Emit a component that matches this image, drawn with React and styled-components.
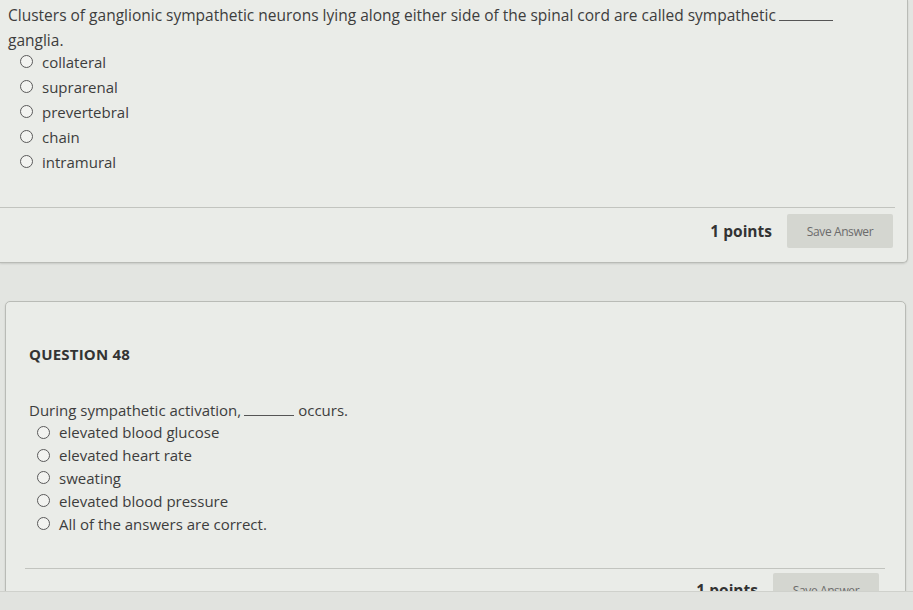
import React from "react";
import styled, { createGlobalStyle } from "styled-components";

const GlobalStyle = createGlobalStyle`
  html, body {
    margin: 0;
    padding: 0;
    background: #e3e5e1;
    font-family: "Open Sans", "Liberation Sans", sans-serif;
    color: #3d3d3d;
    overflow: hidden;
  }
`;

const Page = styled.div`
  width: 913px;
  height: 610px;
  overflow: hidden;
`;

const Card = styled.div`
  background: #eaece8;
  border: 1px solid #b9bbb6;
  border-top: ${props => (props.cut ? "none" : "1px solid #b9bbb6")};
  border-left: ${props => (props.cut ? "none" : "1px solid #b9bbb6")};
  border-radius: ${props => (props.cut ? "0 0 5px 0" : "5px")};
  box-shadow: 0 1px 2px rgba(0, 0, 0, 0.12);
  margin: ${props => props.margin};
`;

const Body = styled.div`
  height: ${props => props.height}px;
  padding: ${props => props.pad};
  box-sizing: border-box;
`;

const Heading = styled.div`
  font-size: 15px;
  font-weight: 700;
  color: #333;
  letter-spacing: 0.2px;
  margin-bottom: 35px;
`;

const Prompt = styled.div`
  font-size: ${props => props.size}px;
  line-height: ${props => props.lh}px;
  width: ${props => props.w}px;
`;

const Blank = styled.span`
  display: inline-block;
  width: ${props => props.w}px;
  border-bottom: 1px solid #555;
  margin: 0 4px 0 3px;
  vertical-align: baseline;
`;

const Options = styled.div`
  display: flex;
  flex-direction: column;
  padding-left: ${props => props.indent}px;
  margin-top: ${props => props.mt || 0}px;
`;

const Option = styled.label`
  display: flex;
  align-items: center;
  gap: 9px;
  height: ${props => props.h}px;
  font-size: 15px;
`;

const Radio = styled.span`
  width: 11px;
  height: 11px;
  border: 1.5px solid #5a5a5a;
  border-radius: 50%;
  background: #f2f3f0;
  flex-shrink: 0;
`;

const Divider = styled.div`
  border-top: 1px solid #c2c4bf;
  margin: ${props => props.margin};
`;

const Footer = styled.div`
  display: flex;
  justify-content: flex-end;
  align-items: center;
  gap: 15px;
  height: ${props => props.h}px;
  padding-right: ${props => props.pr}px;
  padding-bottom: ${props => props.pb || 0}px;
`;

const Points = styled.div`
  font-size: 15.5px;
  font-weight: 700;
  color: #333;
`;

const SaveButton = styled.button`
  width: 106px;
  height: 34px;
  border: none;
  border-radius: 2px;
  background: #d4d6d0;
  color: #6b6b6b;
  font-family: "Open Sans", "Liberation Sans", sans-serif;
  font-size: 12px;
  letter-spacing: -0.4px;
`;

const BottomStrip = styled.div`
  position: fixed;
  left: 0;
  right: 0;
  bottom: 0;
  height: 18px;
  background: #e1e3df;
  border-top: 1px solid #cfd1cc;
`;

const q47 = ["collateral", "suprarenal", "prevertebral", "chain", "intramural"];
const q48 = [
  "elevated blood glucose",
  "elevated heart rate",
  "sweating",
  "elevated blood pressure",
  "All of the answers are correct.",
];

export default function App() {
  return (
    <Page>
      <GlobalStyle />
      <Card cut margin="0 5px 38px 0">
        <Body height={207} pad="3px 0 0 8px">
          <Prompt size={15.5} lh={25} w={830}>
            Clusters of ganglionic sympathetic neurons lying along either side of
            the spinal cord are called sympathetic
            <Blank w={54} />
            ganglia.
          </Prompt>
          <Options indent={12} mt={-4}>
            {q47.map(o => (
              <Option key={o} h={25}>
                <Radio />
                {o}
              </Option>
            ))}
          </Options>
        </Body>
        <Divider margin="0 12px 0 0" />
        <Footer h={46} pb={8} pr={14}>
          <Points>1 points</Points>
          <SaveButton>Save Answer</SaveButton>
        </Footer>
      </Card>
      <Card margin="0 7px 0 5px">
        <Body height={266} pad="42px 0 0 23px">
          <Heading>QUESTION 48</Heading>
          <Prompt size={15} lh={22} w={820}>
            During sympathetic activation,
            <Blank w={50} />
            occurs.
          </Prompt>
          <Options indent={8}>
            {q48.map(o => (
              <Option key={o} h={22.8}>
                <Radio />
                {o}
              </Option>
            ))}
          </Options>
        </Body>
        <Divider margin="0 20px 0 19px" />
        <Footer h={42} pr={26}>
          <Points>1 points</Points>
          <SaveButton>Save Answer</SaveButton>
        </Footer>
      </Card>
      <BottomStrip />
    </Page>
  );
}
